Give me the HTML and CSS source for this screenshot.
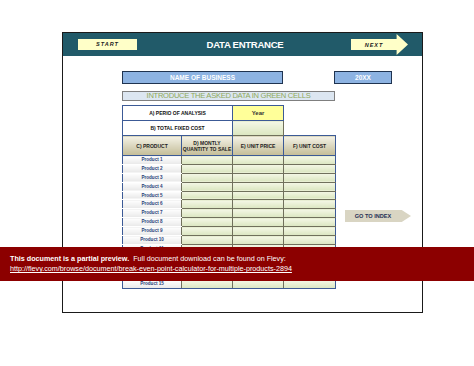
FILE: index.html
```html
<!DOCTYPE html>
<html>
<head>
    <meta charset="utf-8" />
    <title>Data Entrance</title>
    <link rel="stylesheet" href="styles.css">
</head>
<body>
    <div class="sheet">
        <div class="topbar">
            <span class="btn-start">START</span>
            <span class="title">DATA ENTRANCE</span>
            <span class="btn-next"><span>NEXT</span></span>
        </div>

        <div class="content">
            <div class="name-row">
                <div class="name-box">NAME OF BUSINESS</div>
                <div class="year-box">20XX</div>
            </div>
            <div class="intro">INTRODUCE THE ASKED DATA IN GREEN CELLS</div>

            <div class="data-row">
                <table class="grid">
                    <colgroup>
                        <col class="c1">
                        <col class="c2">
                        <col class="c3">
                        <col class="c4">
                    </colgroup>
                    <tr class="row-a">
                        <td colspan="2" class="label">A) PERIO OF ANALYSIS</td>
                        <td class="year">Year</td>
                        <td class="blank"></td>
                    </tr>
                    <tr class="row-b">
                        <td colspan="2" class="label">B) TOTAL FIXED COST</td>
                        <td class="green"></td>
                        <td class="blank"></td>
                    </tr>
                    <tr class="head">
                        <th>C) PRODUCT</th>
                        <th>D) MONTLY QUANTITY TO SALE</th>
                        <th>E) UNIT PRICE</th>
                        <th>F) UNIT COST</th>
                    </tr>
                    <tr class="prod"><td class="pname">Product 1</td><td class="green"></td><td class="green"></td><td class="green"></td></tr>
                    <tr class="prod"><td class="pname">Product 2</td><td class="green"></td><td class="green"></td><td class="green"></td></tr>
                    <tr class="prod"><td class="pname">Product 3</td><td class="green"></td><td class="green"></td><td class="green"></td></tr>
                    <tr class="prod"><td class="pname">Product 4</td><td class="green"></td><td class="green"></td><td class="green"></td></tr>
                    <tr class="prod"><td class="pname">Product 5</td><td class="green"></td><td class="green"></td><td class="green"></td></tr>
                    <tr class="prod"><td class="pname">Product 6</td><td class="green"></td><td class="green"></td><td class="green"></td></tr>
                    <tr class="prod"><td class="pname">Product 7</td><td class="green"></td><td class="green"></td><td class="green"></td></tr>
                    <tr class="prod"><td class="pname">Product 8</td><td class="green"></td><td class="green"></td><td class="green"></td></tr>
                    <tr class="prod"><td class="pname">Product 9</td><td class="green"></td><td class="green"></td><td class="green"></td></tr>
                    <tr class="prod"><td class="pname">Product 10</td><td class="green"></td><td class="green"></td><td class="green"></td></tr>
                    <tr class="prod"><td class="pname">Product 11</td><td class="green"></td><td class="green"></td><td class="green"></td></tr>
                    <tr class="prod"><td class="pname">Product 12</td><td class="green"></td><td class="green"></td><td class="green"></td></tr>
                    <tr class="prod"><td class="pname">Product 13</td><td class="green"></td><td class="green"></td><td class="green"></td></tr>
                    <tr class="prod"><td class="pname">Product 14</td><td class="green"></td><td class="green"></td><td class="green"></td></tr>
                    <tr class="prod"><td class="pname">Product 15</td><td class="green"></td><td class="green"></td><td class="green"></td></tr>
                </table>
                <div class="goto">GO TO INDEX</div>
            </div>
        </div>
    </div>

    <div class="preview">
        <p><b>This document is a partial preview.</b>&nbsp; Full document download can be found on Flevy:</p>
        <p><a href="#">http://flevy.com/browse/document/break-even-point-calculator-for-multiple-products-2894</a></p>
    </div>
</body>
</html>
```

FILE: styles.css
```css
body {
    margin: 0;
    background: #fff;
    font-family: "Liberation Sans", Arial, sans-serif;
}

.sheet {
    box-sizing: border-box;
    width: 361px;
    height: 281px;
    margin: 32px 0 0 62px;
    border: 1.5px solid #1a1a1a;
}

.topbar {
    display: flex;
    align-items: center;
    justify-content: space-between;
    height: 23px;
    padding: 0 14px 0 15px;
    background: #215a69;
}

.btn-start {
    width: 59px;
    height: 11px;
    line-height: 11px;
    background: #ffffc8;
    text-align: center;
    font-size: 5.5px;
    font-weight: bold;
    font-style: italic;
    letter-spacing: 1px;
    color: #222;
}

.title {
    margin-left: 2px;
    color: #fff;
    font-size: 9.6px;
    font-weight: bold;
    letter-spacing: -0.3px;
}

.btn-next {
    display: flex;
    align-items: center;
    width: 57px;
    height: 21px;
    background: #ffffc8;
    clip-path: polygon(0 24%, 80% 24%, 80% 0, 100% 50%, 80% 100%, 80% 76%, 0 76%);
}

.btn-next span {
    width: 46px;
    text-align: center;
    font-size: 5.5px;
    font-weight: bold;
    font-style: italic;
    letter-spacing: 1px;
    color: #222;
}

.content {
    padding: 15px 0 0 59px;
}

.name-row {
    display: flex;
    gap: 51px;
}

.name-box,
.year-box {
    box-sizing: border-box;
    height: 13px;
    line-height: 11px;
    background: #8db3e2;
    border: 1px solid #1f3350;
    color: #fff;
    font-size: 6.5px;
    font-weight: bold;
    text-align: center;
}

.name-box {
    width: 161px;
}

.year-box {
    width: 58px;
}

.intro {
    box-sizing: border-box;
    width: 213px;
    height: 10px;
    margin-top: 7px;
    line-height: 8px;
    background: #dce6f1;
    border: 1px solid #7f7f7f;
    color: #8fa85a;
    font-size: 7.6px;
    text-align: center;
    letter-spacing: -0.3px;
}

.data-row {
    display: flex;
    align-items: flex-start;
    margin-top: 4px;
}

.grid {
    border-collapse: collapse;
    table-layout: fixed;
    width: 213px;
    font-size: 5px;
}

.grid td,
.grid th {
    padding: 0;
    text-align: center;
}

.c1 { width: 59px; }
.c2 { width: 51px; }
.c3 { width: 51px; }
.c4 { width: 52px; }

.row-a td,
.row-b td {
    height: 14px;
}

.label {
    background: #fff;
    border: 1.5px solid #3c5a96;
    font-weight: bold;
    color: #111;
}

.year {
    background: #ffff99;
    border: 1.5px solid #3c5a96;
    font-size: 6px;
    font-weight: bold;
    color: #333;
}

.blank {
    border: none;
}

.head th {
    height: 19px;
    background: linear-gradient(#f4f2e6, #d6d1b6 60%, #c4bd97);
    border: 1.5px solid #3c5a96;
    border-top-width: 1px;
    color: #1e1e1e;
    font-weight: bold;
    line-height: 6px;
}

.prod td {
    height: 7.9px;
    line-height: 6px;
}

.pname {
    background: linear-gradient(#ffffff, #e8e8e8);
    border-left: 1.5px solid #3c5a96;
    border-bottom: 1px solid #fff;
    color: #2b3f7a;
    font-weight: bold;
    font-size: 4.6px;
}

.green {
    background: linear-gradient(#f4f7e6, #dbe6c0);
    border: 1px solid #70705c;
}

.prod td:last-child {
    border-right: 1.5px solid #3c5a96;
}

.prod:last-child td {
    border-bottom: 1.5px solid #3c5a96;
}

.goto {
    width: 56px;
    height: 12px;
    margin: 105px 0 0 9px;
    padding-right: 10px;
    line-height: 12px;
    background: #d9d5c3;
    color: #1f2f55;
    font-size: 5.6px;
    font-weight: bold;
    text-align: center;
    clip-path: polygon(0 0, 86% 0, 100% 50%, 86% 100%, 0 100%);
}

.preview {
    position: absolute;
    left: 0;
    top: 247px;
    width: 100%;
    height: 34px;
    box-sizing: border-box;
    padding: 7px 10px 0;
    background: #8c0000;
    color: #fff;
    font-size: 7.2px;
    line-height: 10px;
}

.preview p {
    margin: 0;
}

.preview a {
    color: #fff;
}
```
